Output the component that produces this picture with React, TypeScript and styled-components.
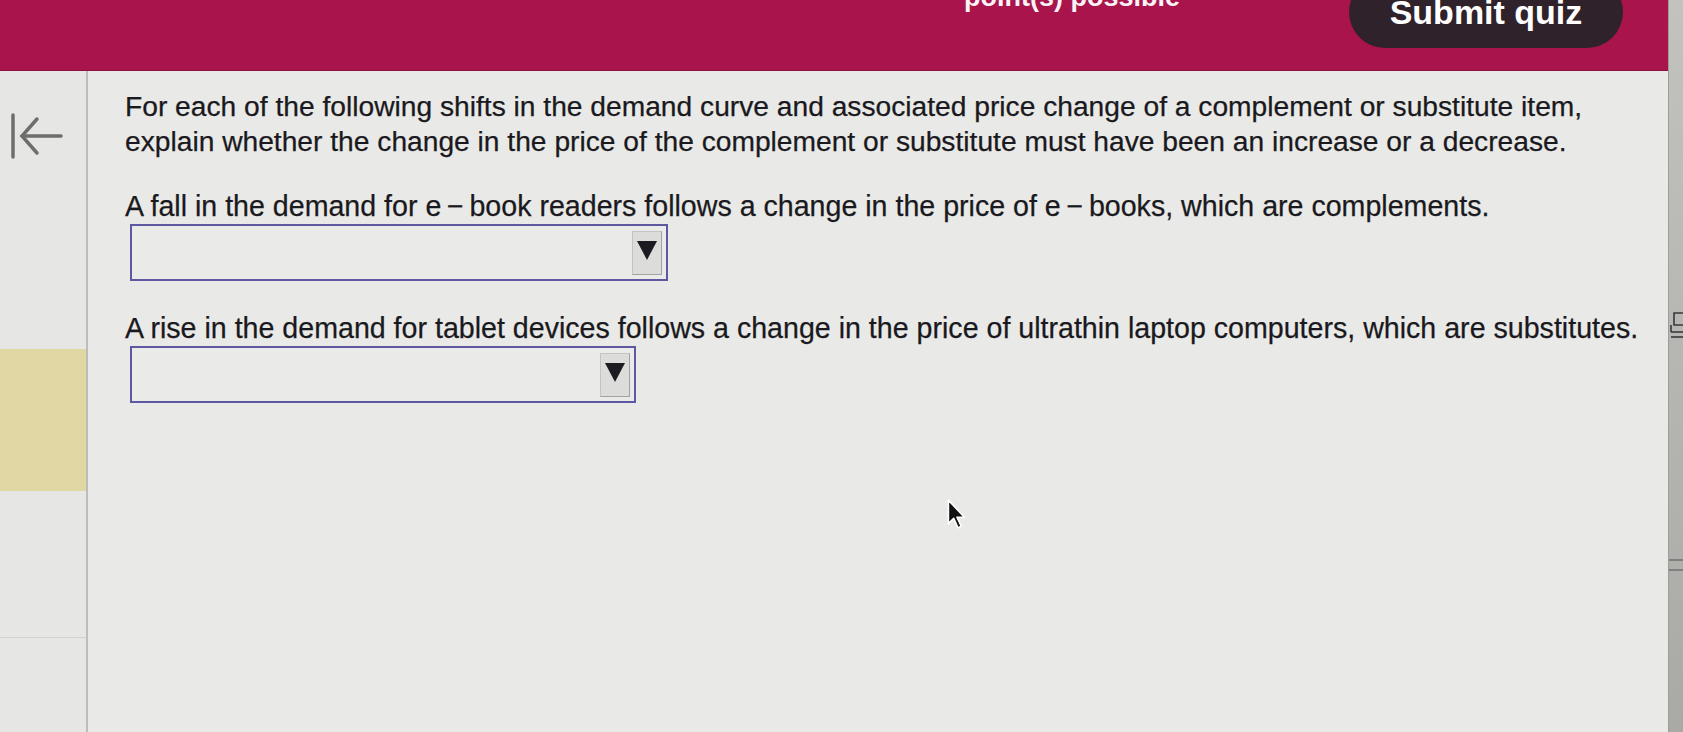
import React from 'react';
import styled, {createGlobalStyle} from 'styled-components';

const GlobalStyle = createGlobalStyle`
    html, body {
        margin: 0;
        padding: 0;
        width: 1683px;
        height: 732px;
        overflow: hidden;
        background: #e7e7e5;
        font-family: "Liberation Sans", Arial, sans-serif;
    }`;

const Screen = styled.div`
    display: flex;
    width: 1683px;
    height: 732px;
    overflow: hidden;`;

const Window = styled.div`
    flex: 0 0 1668px;
    display: flex;
    flex-direction: column;
    background: #e9e9e7;`;

const Header = styled.header`
    height: 70px;
    flex: 0 0 70px;
    display: flex;
    justify-content: flex-end;
    align-items: flex-start;
    overflow: hidden;
    background: #a8144b;
    border-bottom: 1px solid #8c1240;`;

const PointsLabel = styled.span`
    margin-top: -16px;
    margin-right: 169px;
    font-size: 27px;
    line-height: 27px;
    font-weight: bold;
    color: #fbf3f6;`;

const SubmitButton = styled.button`
    margin-top: -24px;
    margin-right: 45px;
    width: 274px;
    height: 72px;
    border: none;
    border-radius: 36px;
    background: #30222b;
    color: #ffffff;
    font-family: "Liberation Sans", Arial, sans-serif;
    font-size: 34px;
    font-weight: bold;
    line-height: 72px;
    padding: 0;`;

const Body = styled.div`
    flex: 1;
    display: flex;
    position: relative;`;

const Sidebar = styled.aside`
    flex: 0 0 86px;
    display: flex;
    flex-direction: column;
    background: #e6e6e4;
    border-right: 2px solid #bdbdbb;`;

const BackIcon = styled.svg`
    margin: 42px 0 0 10px;
    display: block;`;

const Highlight = styled.div`
    margin-top: 190px;
    height: 142px;
    background: #e0d7a5;`;

const Divider = styled.div`
    margin-top: 146px;
    height: 1px;
    background: #d2d2d0;`;

const Content = styled.main`
    flex: 1;
    padding: 18px 0 0 37px;
    color: #1a1920;
    -webkit-text-stroke: 0.25px #1a1920;`;

const Intro = styled.p`
    margin: 0 0 30px;
    font-size: 28.2px;
    line-height: 35px;
    white-space: nowrap;`;

const Question = styled.div`
    display: flex;
    flex-direction: column;
    align-items: flex-start;
    margin-bottom: 30px;`;

const Prompt = styled.p`
    margin: 0;
    font-size: 28.6px;
    line-height: 35px;
    white-space: nowrap;`;

const Select = styled.div<{ $width: number }>`
    margin-left: 5px;
    box-sizing: border-box;
    width: ${p => p.$width}px;
    height: 57px;
    display: flex;
    justify-content: flex-end;
    align-items: center;
    padding-right: 4px;
    border: 2px solid #5d58a0;
    background: #eaeae8;`;

const DropButton = styled.div`
    box-sizing: border-box;
    width: 30px;
    height: 44px;
    display: flex;
    justify-content: center;
    align-items: flex-start;
    padding-top: 9px;
    background: #dcdcda;
    border: 1px solid #c4c4c2;
    border-right-color: #a2a2a0;
    border-bottom-color: #a2a2a0;`;

const Arrow = styled.div`
    width: 0;
    height: 0;
    border-left: 10px solid transparent;
    border-right: 10px solid transparent;
    border-top: 19px solid #1c1b22;`;

const Cursor = styled.svg`
    position: absolute;
    left: 946px;
    top: 427px;`;

const Bezel = styled.div`
    flex: 1;
    display: flex;
    flex-direction: column;
    background: linear-gradient(180deg, #c2c2be 0%, #b3b3af 60%, #a9a9a5 100%);
    border-left: 1px solid #9d9d99;`;

const BezelMark = styled.svg<{ $top: number }>`
    display: block;
    margin-top: ${p => p.$top}px;`;

interface DropdownProps {
    width: number;
}

const Dropdown = ({width}: DropdownProps) => (
    <Select $width={width}>
        <DropButton><Arrow /></DropButton>
    </Select>
);

const questions = [
    {
        text: 'A fall in the demand for e\u2009\u2212\u2009book readers follows a change in the price of e\u2009\u2212\u2009books, which are complements.',
        width: 538
    },
    {
        text: 'A rise in the demand for tablet devices follows a change in the price of ultrathin laptop computers, which are substitutes.',
        width: 506
    }
];

export default function App() {
    return (
        <Screen>
            <GlobalStyle />
            <Window>
                <Header>
                    <PointsLabel>point(s) possible</PointsLabel>
                    <SubmitButton>Submit quiz</SubmitButton>
                </Header>
                <Body>
                    <Sidebar>
                        <BackIcon width="54" height="46" viewBox="0 0 54 46">
                            <g stroke="#6e6e6e" strokeWidth="3.5" fill="none" strokeLinecap="round">
                                <line x1="3" y1="2" x2="3" y2="44" />
                                <line x1="12" y1="23" x2="51" y2="23" />
                                <polyline points="27,6 12,23 27,40" />
                            </g>
                        </BackIcon>
                        <Highlight />
                        <Divider />
                    </Sidebar>
                    <Content>
                        <Intro>
                            For each of the following shifts in the demand curve and associated price change of a complement or substitute item,
                            <br />
                            explain whether the change in the price of the complement or substitute must have been an increase or a decrease.
                        </Intro>
                        {questions.map((q, i) => (
                            <Question key={i}>
                                <Prompt>{q.text}</Prompt>
                                <Dropdown width={q.width} />
                            </Question>
                        ))}
                    </Content>
                    <Cursor width="24" height="32" viewBox="0 0 22 30">
                        <path d="M2 2 L2 24 L7 19 L11 28 L14 26.5 L10 18 L17 18 Z"
                              fill="#111" stroke="#fff" strokeWidth="1.5" strokeLinejoin="round" />
                    </Cursor>
                </Body>
            </Window>
            <Bezel>
                <BezelMark $top={310} width="15" height="32" viewBox="0 0 15 32">
                    <g stroke="#3a3a3a" strokeWidth="1.6" fill="none">
                        <polyline points="15,3 5,3 5,15 15,15" />
                        <line x1="2" y1="15" x2="2" y2="22" />
                        <line x1="2" y1="22" x2="15" y2="22" />
                        <line x1="2" y1="27" x2="15" y2="27" />
                    </g>
                </BezelMark>
                <BezelMark $top={216} width="15" height="14" viewBox="0 0 15 14">
                    <g stroke="#6c6c6a" strokeWidth="1.4">
                        <line x1="0" y1="2" x2="15" y2="2" />
                        <line x1="0" y1="12" x2="15" y2="12" />
                    </g>
                </BezelMark>
            </Bezel>
        </Screen>
    );
}
